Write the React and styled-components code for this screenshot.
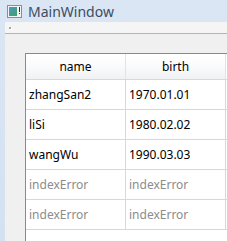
import React from 'react';
import styled, { createGlobalStyle } from 'styled-components';

const GlobalStyle = createGlobalStyle`
  html, body {
    margin: 0;
    padding: 0;
    overflow: hidden;
  }
  body {
    font-family: "Noto Sans", "Open Sans", sans-serif;
  }
`

const Frame = styled.div`
  width: 227px;
  height: 241px;
  background: linear-gradient(to bottom, #dbe6f4, #d3e1f1);
  display: flex;
  flex-direction: column;
  overflow: hidden;
`

const TitleBar = styled.div`
  height: 22px;
  display: flex;
  align-items: center;
  padding-left: 7px;
  flex-shrink: 0;
`

const Title = styled.span`
  margin-left: 6px;
  font-family: "Noto Sans", sans-serif;
  font-size: 14px;
  color: #3c4d62;
`

const Client = styled.div`
  flex: 1;
  margin-left: 5px;
  background: #f0f0f0;
  display: flex;
  flex-direction: column;
  min-height: 0;
`

const MenuBar = styled.div`
  height: 11px;
  background: #f5f5f5;
  border-bottom: 1px solid #b4b4b4;
  display: flex;
  align-items: center;
  padding-left: 4px;
  flex-shrink: 0;
`

const Grip = styled.div`
  width: 2px;
  height: 2px;
  background: #a8a8a8;
  box-shadow: 1px 1px 0 #fff;
`

const Content = styled.div`
  padding: 19px 0 0 20px;
  flex: 1;
  min-height: 0;
`

const Table = styled.div`
  background: #fff;
  border-top: 1px solid #8a8a8a;
  border-left: 1px solid #8a8a8a;
  height: 200px;
  width: 220px;
`

const Row = styled.div`
  display: grid;
  grid-template-columns: 100px 100px;
  height: ${p => p.$h}px;
  border-bottom: 1px solid #d8d8d8;
`

const HeadCell = styled.div`
  background: linear-gradient(to bottom, #ffffff 0%, #fafbfc 45%, #f1f2f4 100%);
  border-right: 1px solid #e3e3e3;
  display: flex;
  align-items: center;
  justify-content: center;
  font-size: 12px;
  color: #000;
`

const Cell = styled.div`
  border-right: 1px solid #d8d8d8;
  display: flex;
  align-items: center;
  padding-left: 3px;
  font-size: 12px;
  color: ${p => (p.$muted ? '#8c8c8c' : '#000')};
`

const WindowIcon = () => (
  <svg width="15" height="13" viewBox="0 0 15 13">
    <rect x="0.5" y="0.5" width="14" height="12" fill="#f4f4f4" stroke="#8a8f96" />
    <defs>
      <linearGradient id="ig" x1="0" y1="0" x2="1" y2="1">
        <stop offset="0" stopColor="#4a9ad0" />
        <stop offset="1" stopColor="#3fa05a" />
      </linearGradient>
    </defs>
    <rect x="2" y="2" width="8" height="9" fill="url(#ig)" />
    <rect x="12" y="2" width="1" height="5" fill="#333" />
    <rect x="12" y="8" width="1" height="1" fill="#333" />
  </svg>
);

const rows = [
  ['zhangSan2', '1970.01.01'],
  ['liSi', '1980.02.02'],
  ['wangWu', '1990.03.03'],
  ['indexError', 'indexError', true],
  ['indexError', 'indexError', true],
];

export default function App() {
  return (
    <>
      <GlobalStyle />
      <Frame>
        <TitleBar>
          <WindowIcon />
          <Title>MainWindow</Title>
        </TitleBar>
        <Client>
          <MenuBar>
            <Grip />
          </MenuBar>
          <Content>
            <Table>
              <Row $h={25}>
                <HeadCell>name</HeadCell>
                <HeadCell>birth</HeadCell>
              </Row>
              {rows.map((r, i) => (
                <Row key={i} $h={29}>
                  <Cell $muted={r[2]}>{r[0]}</Cell>
                  <Cell $muted={r[2]}>{r[1]}</Cell>
                </Row>
              ))}
            </Table>
          </Content>
        </Client>
      </Frame>
    </>
  );
}
